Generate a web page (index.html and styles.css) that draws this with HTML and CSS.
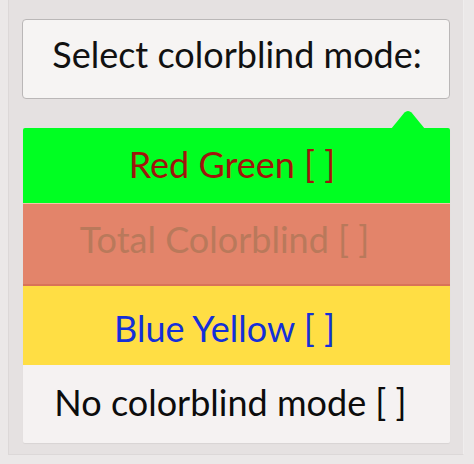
FILE: index.html
```html
<!DOCTYPE html>
<html lang="en">
<head>
<meta charset="utf-8">
<title>Colorblind mode</title>
<link rel="stylesheet" href="styles.css">
</head>
<body>
  <div class="frame">
    <button class="picker" type="button">Select colorblind mode:</button>
    <div class="menu">
      <svg class="menu-caret" width="34" height="18" viewBox="0 0 34 18" aria-hidden="true">
        <path d="M0 18 L13.5 1.5 Q15 0 17 0 Q19 0 20.5 1.5 L34 18 Z" fill="#00ff22"/>
      </svg>
      <div class="option opt-rg">Red Green [ ]</div>
      <div class="option opt-total">Total Colorblind [ ]</div>
      <div class="option opt-by">Blue Yellow [ ]</div>
      <div class="option opt-none">No colorblind mode [ ]</div>
    </div>
  </div>
</body>
</html>
```

FILE: styles.css
```css
html, body {
  margin: 0;
  padding: 0;
}

body {
  background: #ebe8e8;
  font-family: Lato, "Open Sans", sans-serif;
  width: 474px;
  height: 464px;
  overflow: hidden;
}

.frame {
  margin: 0 10px 0 8px;
  height: 455px;
  box-sizing: border-box;
  padding: 19px 12px 0 13px;
  background: #e5e1e1;
  border-left: 1px solid #dcd8d8;
  border-right: 1px solid #efeded;
  border-bottom: 1px solid #dcd8d8;
}

.picker {
  display: block;
  width: 428px;
  height: 80px;
  margin: 0;
  padding: 0 0 10px 2px;
  box-sizing: border-box;
  border: 1px solid #bab7b7;
  border-radius: 4px;
  background: #f6f4f3;
  color: #111;
  font-family: inherit;
  font-size: 36px;
  text-align: center;
}

.menu {
  position: relative;
  margin-top: 29px;
  margin-left: 1px;
  width: 427px;
  border-radius: 2px;
  box-shadow: 0 1px 1px rgba(0, 0, 0, 0.06);
}

.menu-caret {
  position: absolute;
  top: -17px;
  left: 368px;
  display: block;
}

.option {
  display: flex;
  align-items: center;
  justify-content: center;
  box-sizing: border-box;
  font-size: 36px;
}

.opt-rg {
  height: 75px;
  background: #00ff22;
  color: #a0140c;
  padding: 0 9px 4px 0;
  border-radius: 2px 2px 0 0;
}

.opt-total {
  height: 83px;
  background: #e3846a;
  color: #b9795b;
  border-top: 1px solid #f2c6a8;
  border-bottom: 2px solid #d87358;
  padding: 0 24px 10px 0;
}

.opt-by {
  height: 79px;
  background: #ffde44;
  color: #1430d8;
  padding: 5px 24px 0 0;
}

.opt-none {
  height: 78px;
  background: #f5f2f2;
  color: #0c0c0c;
  padding: 0 12px 4px 0;
  border-radius: 0 0 2px 2px;
}
```
